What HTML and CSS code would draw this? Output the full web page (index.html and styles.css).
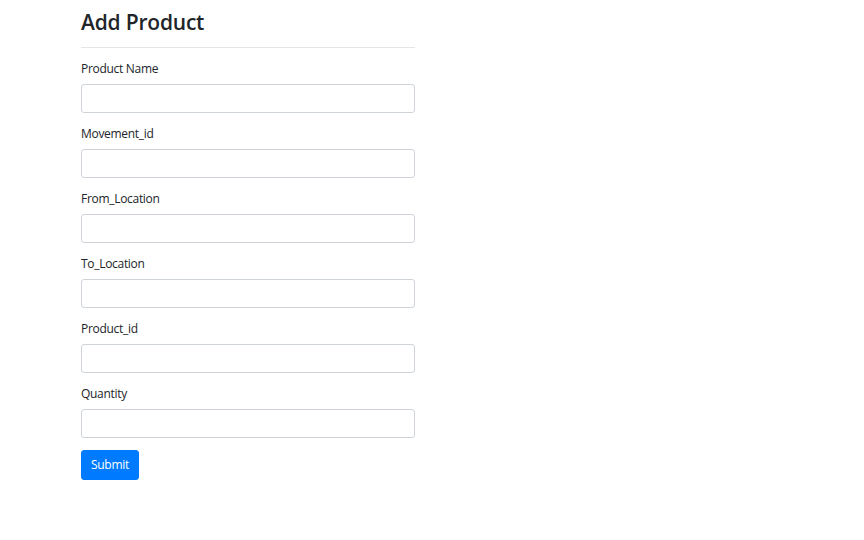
FILE: index.html
```html
<!DOCTYPE html>
<html lang="en">
<head>
    <meta charset="UTF-8">
    <meta name="viewport" content="width=device-width, initial-scale=1.0">
    <title>Add Product</title>
    <link rel="stylesheet" href="styles.css">
</head>
<body>
    <div class="container">
        <h3>Add Product</h3>
        <hr>
        <form>
            <div class="form-group">
                <label for="product-name">Product Name</label>
                <input type="text" id="product-name" class="form-control">
            </div>
            <div class="form-group">
                <label for="movement-id">Movement_id</label>
                <input type="text" id="movement-id" class="form-control">
            </div>
            <div class="form-group">
                <label for="from-location">From_Location</label>
                <input type="text" id="from-location" class="form-control">
            </div>
            <div class="form-group">
                <label for="to-location">To_Location</label>
                <input type="text" id="to-location" class="form-control">
            </div>
            <div class="form-group">
                <label for="product-id">Product_id</label>
                <input type="text" id="product-id" class="form-control">
            </div>
            <div class="form-group">
                <label for="quantity">Quantity</label>
                <input type="text" id="quantity" class="form-control">
            </div>
            <button type="submit" class="btn">Submit</button>
        </form>
    </div>
</body>
</html>
```

FILE: styles.css
```css
body {
    font-family: "Open Sans", "Noto Sans", Arial, sans-serif;
    font-size: 12px;
    line-height: 18px;
    color: #212529;
    background-color: #fff;
    margin: 0;
}

.container {
    width: 334px;
    margin: 0 81px;
    padding-top: 10px;
}

h3 {
    font-size: 21px;
    font-weight: 600;
    line-height: 25px;
    letter-spacing: -0.2px;
    margin: 0 0 6px 0;
}

hr {
    border: 0;
    border-top: 1px solid rgba(0, 0, 0, 0.1);
    margin: 12px 0;
}

.form-group {
    margin-bottom: 12px;
}

.form-group label {
    display: block;
    margin-bottom: 6px;
    letter-spacing: -0.3px;
}

.form-control {
    display: block;
    width: 100%;
    height: 29px;
    padding: 4px 9px;
    font: inherit;
    border: 1px solid #ced4da;
    border-radius: 3px;
    box-sizing: border-box;
}

.btn {
    font: inherit;
    letter-spacing: -0.3px;
    color: #fff;
    background-color: #007bff;
    border: 1px solid #007bff;
    border-radius: 3px;
    padding: 5px 9px;
    cursor: pointer;
}
```
